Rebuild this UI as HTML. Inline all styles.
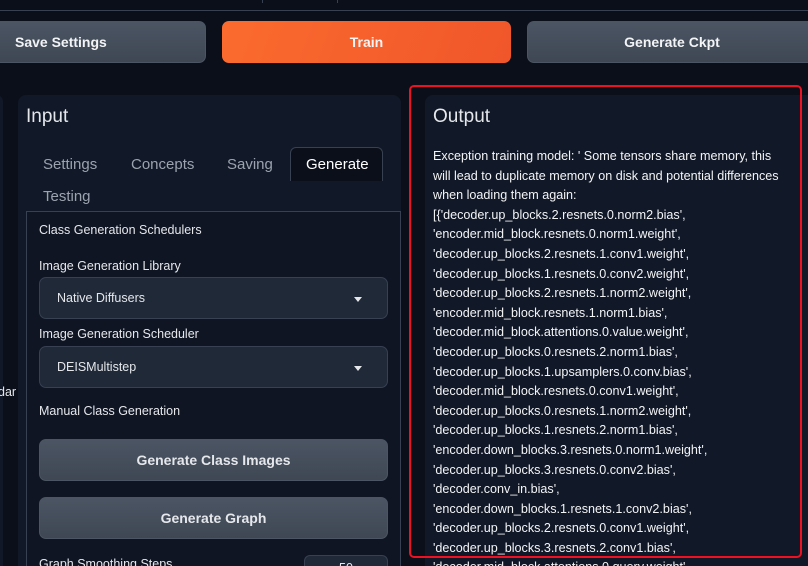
<!DOCTYPE html>
<html style="width:808px;height:566px;overflow:hidden"><head><style>
*{box-sizing:border-box;margin:0;padding:0}
body{width:808px;height:566px;overflow:hidden;background:#0b0f19;font-family:"Liberation Sans",sans-serif;color:#e5e7eb;position:relative}
.a{position:absolute}
.tabs{top:-8px;left:0;width:808px;height:19px;border-bottom:1px solid #374151}
.tabs span{position:absolute;top:-8px;font-size:13px;color:#9ca3af}
.top{top:21px;height:42px;border-radius:7px;font-weight:bold;font-size:14px;display:flex;align-items:center;justify-content:center;color:#f3f4f6}
.gray{background:linear-gradient(#4b5563,#3f4754);border:1px solid #4b5563}
.panel{background:#111827;border-radius:8px}
.lbl{font-size:12.5px;color:#e5e7eb;left:39px}
.dd{left:39px;width:349px;height:42px;background:#1f2937;border:1px solid #374151;border-radius:7px;font-size:12.5px;padding-left:17px;display:flex;align-items:center}
.dd:after{content:"";position:absolute;right:25px;top:19px;border:4px solid transparent;border-top:5px solid #e5e7eb}
.btn{left:39px;width:349px;height:42px;border-radius:7px;font-weight:bold;font-size:14px;display:flex;align-items:center;justify-content:center}
.out{font-size:12.6px;line-height:19.6px;color:#f3f4f6;white-space:pre;left:433px;top:147px}
</style></head><body>
<div class="a" style="left:0;top:0;width:808px;height:566px;overflow:hidden">
<div class="a tabs">
<span style="left:8px">Checkpoint Merger</span><span style="left:117px">Train</span><span style="left:185px">Deforum</span>
<span style="left:262px;top:-16px;height:27px;width:76px;background:#0b0f19;border:1px solid #374151;border-bottom:none"></span>
<span style="left:275px;color:#fff">Dreambooth</span><span style="left:394px">Settings</span><span style="left:486px">Extensions</span>
</div>
<div class="a top gray" style="left:-8px;width:214px;justify-content:flex-start;padding-left:22px">Save Settings</div>
<div class="a top" style="left:222px;width:289px;background:linear-gradient(110deg,#fb6b2e,#f0562a)">Train</div>
<div class="a top gray" style="left:527px;width:290px">Generate Ckpt</div>

<div class="a panel" style="left:-10px;top:95px;width:13px;height:480px;background:#111827"></div>
<div class="a" style="left:-2px;top:385px;font-size:12.5px">dar</div>

<div class="a panel" style="left:18px;top:95px;width:383px;height:480px"></div>
<div class="a" style="left:26px;top:106px;font-size:19px">Input</div>
<div class="a" style="left:290px;top:147px;width:93px;height:34px;background:#0b0f19;border:1px solid #374151;border-bottom:none;border-radius:6px 6px 0 0"></div>
<div class="a" style="top:156px;left:43px;font-size:15px;color:#9ca3af">Settings</div>
<div class="a" style="top:156px;left:131px;font-size:15px;color:#9ca3af">Concepts</div>
<div class="a" style="top:156px;left:227px;font-size:15px;color:#9ca3af">Saving</div>
<div class="a" style="top:156px;left:306px;font-size:15px;color:#fff">Generate</div>
<div class="a" style="top:188px;left:43px;font-size:15px;color:#9ca3af">Testing</div>
<div class="a" style="left:26px;top:211px;width:375px;height:370px;border:1px solid #374151;background:#0f1523"></div>
<div class="a lbl" style="top:223px">Class Generation Schedulers</div>
<div class="a lbl" style="top:259px">Image Generation Library</div>
<div class="a dd" style="top:277px">Native Diffusers</div>
<div class="a lbl" style="top:327px">Image Generation Scheduler</div>
<div class="a dd" style="top:346px">DEISMultistep</div>
<div class="a lbl" style="top:404px">Manual Class Generation</div>
<div class="a btn gray" style="top:439px">Generate Class Images</div>
<div class="a btn gray" style="top:497px">Generate Graph</div>
<div class="a lbl" style="top:557px">Graph Smoothing Steps</div>
<div class="a" style="left:304px;top:555px;width:84px;height:30px;border:1px solid #374151;border-radius:6px;background:#1f2937;font-size:12.5px;text-align:center;padding-top:5px">50</div>

<div class="a panel" style="left:425px;top:95px;width:400px;height:480px"></div>
<div class="a" style="left:433px;top:106px;font-size:19px">Output</div>
<div class="a out">Exception training model: ' Some tensors share memory, this
will lead to duplicate memory on disk and potential differences
when loading them again:
[{'decoder.up_blocks.2.resnets.0.norm2.bias',
'encoder.mid_block.resnets.0.norm1.weight',
'decoder.up_blocks.2.resnets.1.conv1.weight',
'decoder.up_blocks.1.resnets.0.conv2.weight',
'decoder.up_blocks.2.resnets.1.norm2.weight',
'encoder.mid_block.resnets.1.norm1.bias',
'decoder.mid_block.attentions.0.value.weight',
'decoder.up_blocks.0.resnets.2.norm1.bias',
'decoder.up_blocks.1.upsamplers.0.conv.bias',
'decoder.mid_block.resnets.0.conv1.weight',
'decoder.up_blocks.0.resnets.1.norm2.weight',
'decoder.up_blocks.1.resnets.2.norm1.bias',
'encoder.down_blocks.3.resnets.0.norm1.weight',
'decoder.up_blocks.3.resnets.0.conv2.bias',
'decoder.conv_in.bias',
'encoder.down_blocks.1.resnets.1.conv2.bias',
'decoder.up_blocks.2.resnets.0.conv1.weight',
'decoder.up_blocks.3.resnets.2.conv1.bias',
'decoder.mid_block.attentions.0.query.weight',</div>
<div class="a" style="left:409px;top:85px;width:393px;height:473px;border:2px solid #ee1122;border-radius:5px"></div>
</div>
</body></html>
